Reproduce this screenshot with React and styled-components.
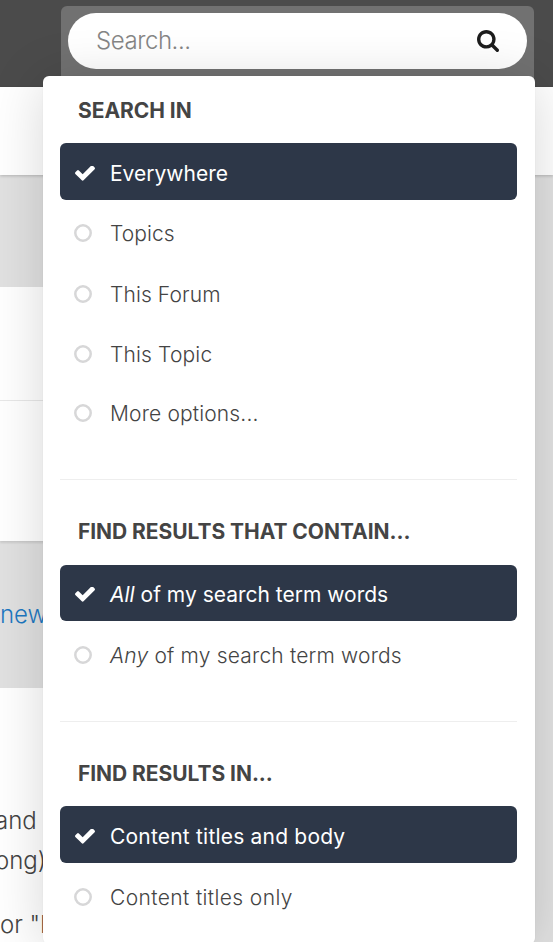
import styled, { createGlobalStyle, css } from "styled-components"

const GlobalStyle = createGlobalStyle`
	* {
		box-sizing: border-box;
	}
	body {
		margin: 0;
		overflow: hidden;
		background-color: #e1e1e1;
		color: #444444;
		font-family: Inter, "Liberation Sans", sans-serif;
		font-weight: 300;
	}
`

const Page = styled.div`
	position: relative;
	width: 553px;
	height: 942px;
	overflow: hidden;
`

const Header = styled.header`
	display: flex;
	height: 87px;
	padding: 6px 19px 0 61px;
	background-color: #4b4b4b;
`

const SearchWrapper = styled.div`
	flex: 1;
	height: 76px;
	padding: 7px;
	border-radius: 6px 6px 0 0;
	background-color: #717171;
`

const SearchBar = styled.div`
	display: flex;
	align-items: center;
	justify-content: space-between;
	height: 56px;
	padding: 0 28px;
	border-radius: 28px;
	background-color: #ffffff;
	color: #1d1d1d;
`

const Placeholder = styled.span`
	padding-bottom: 1px;
	color: #858585;
	font-size: 24px;
	letter-spacing: -0.45px;
`

const NavBar = styled.div`
	height: 88px;
	background-color: #ffffff;
	box-shadow: 0 1px 3px rgba(0, 0, 0, 0.2);
`

const Content = styled.main`
	display: flex;
	flex-direction: column;
	width: 500px;
	padding-top: 112px;
	font-size: 24px;
	white-space: nowrap;
`

const Panel = styled.div`
	height: 254px;
	background-color: #ffffff;
	box-shadow: 0 2px 2px rgba(0, 0, 0, 0.1);
`

const PanelRow = styled.div`
	height: 114px;
	border-bottom: 1px solid #e8e8e8;
`

const LinkRow = styled.div`
	display: flex;
	align-items: center;
	height: 147px;
	color: #1d78c1;
`

const Post = styled.div`
	height: 300px;
	padding-top: 113px;
	background-color: #ffffff;
	line-height: 40px;
`

const PostText = styled.p`
	margin: 0 0 24px ${(props) => props.$shift || 0}px;
`

const Menu = styled.div`
	position: absolute;
	top: 76px;
	left: 43px;
	width: 492px;
	height: 868px;
	padding: 0 18px 0 17px;
	border-radius: 6px;
	background-color: #ffffff;
	box-shadow: 0 6px 55px rgba(0, 0, 0, 0.16), 0 0 2px rgba(0, 0, 0, 0.06);
`

const Section = styled.section`
	padding-bottom: 34.3px;
	& + & {
		padding-top: 17.2px;
		border-top: 1px solid #eeeeee;
	}
`

const SectionTitle = styled.h4`
	margin: 0;
	padding: 0 18px;
	height: 67px;
	line-height: 70px;
	font-size: 21px;
	font-weight: 650;
	letter-spacing: -0.05px;
	text-transform: uppercase;
	white-space: nowrap;
	${Section} + ${Section} & {
		height: 67.5px;
	}
`

const Option = styled.div`
	display: flex;
	align-items: center;
	height: 56.5px;
	margin-bottom: ${(props) => (props.$active ? 4.7 : 3.7)}px;
	padding: 3px 15px 0;
	border-radius: 6px;
	font-size: 21px;
	font-weight: 350;
	letter-spacing: ${(props) => props.$spacing || 0}px;
	white-space: pre;
	${(props) =>
		props.$active &&
		css`
			background-color: #2d3748;
			color: #ffffff;
			font-weight: 400;
		`}
	${Section}:first-of-type & {
		padding-top: ${(props) => (props.$active ? 4 : 3)}px;
	}
	${Section}:first-of-type &:last-child {
		padding-top: 1.5px;
	}
`

const OptionIcon = styled.span`
	display: flex;
	align-items: center;
	width: 35px;
`

const CheckIcon = () => (
	<svg width="20" height="15" viewBox="121 406 1550 1116" fill="currentColor">
		<path d="M1671 566q0 40-28 68l-724 724-136 136q-28 28-68 28t-68-28l-136-136-362-362q-28-28-28-68t28-68l136-136q28-28 68-28t68 28l294 295 656-657q28-28 68-28t68 28l136 136q28 28 28 68z" />
	</svg>
)

const CircleIcon = styled(({ className }) => (
	<svg className={className} width="18" height="18" viewBox="0 0 18 18" fill="none">
		<circle cx="9" cy="9" r="7.7" stroke="currentColor" strokeWidth="2.5" />
	</svg>
))`
	margin: 0 0 1px -1px;
	color: #d7d7d8;
`

const SearchIcon = () => (
	<svg width="22" height="22" viewBox="64 128 1664 1664" fill="currentColor">
		<path d="M1216 832q0-185-131.5-316.5t-316.5-131.5-316.5 131.5-131.5 316.5 131.5 316.5 316.5 131.5 316.5-131.5 131.5-316.5zm512 832q0 52-38 90t-90 38q-54 0-90-38l-343-342q-179 124-399 124-143 0-273.5-55.5t-225-150-150-225-55.5-273.5 55.5-273.5 150-225 225-150 273.5-55.5 273.5 55.5 225 150 150 225 55.5 273.5q0 220-124 399l343 343q37 37 37 90z" />
	</svg>
)

const sections = [
	{
		title: "Search in",
		options: [
			{ label: "Everywhere" },
			{ label: "Topics", spacing: 0.05 },
			{ label: "This Forum", spacing: 0.1 },
			{ label: "This Topic", spacing: 0.15 },
			{ label: "More options...", spacing: 0.15 },
		],
	},
	{
		title: "Find results that contain...",
		options: [
			{ label: <><em>All</em> of my search term words</> },
			{ label: <><em>Any</em> of my search term words</>, spacing: 0.18 },
		],
	},
	{
		title: "Find results in...",
		options: [
			{ label: "Content titles and body", spacing: 0.2 },
			{ label: "Content titles only", spacing: 0.38 },
		],
	},
]

function App() {
	return (
		<Page>
			<GlobalStyle />
			<Header>
				<SearchWrapper>
					<SearchBar>
						<Placeholder>Search...</Placeholder>
						<SearchIcon />
					</SearchBar>
				</SearchWrapper>
			</Header>
			<NavBar />
			<Content>
				<Panel>
					<PanelRow />
				</Panel>
				<LinkRow>new</LinkRow>
				<Post>
					<PostText $shift={-5}>
						and
						<br />
						ong)
					</PostText>
					<PostText>or "l</PostText>
				</Post>
			</Content>
			<Menu>
				{sections.map((section) => (
					<Section key={section.title}>
						<SectionTitle>{section.title}</SectionTitle>
						{section.options.map((option, index) => (
							<Option key={index} $active={index === 0} $spacing={option.spacing}>
								<OptionIcon>
									{index === 0 ? <CheckIcon /> : <CircleIcon />}
								</OptionIcon>
								<span>{option.label}</span>
							</Option>
						))}
					</Section>
				))}
			</Menu>
		</Page>
	)
}

export default App
